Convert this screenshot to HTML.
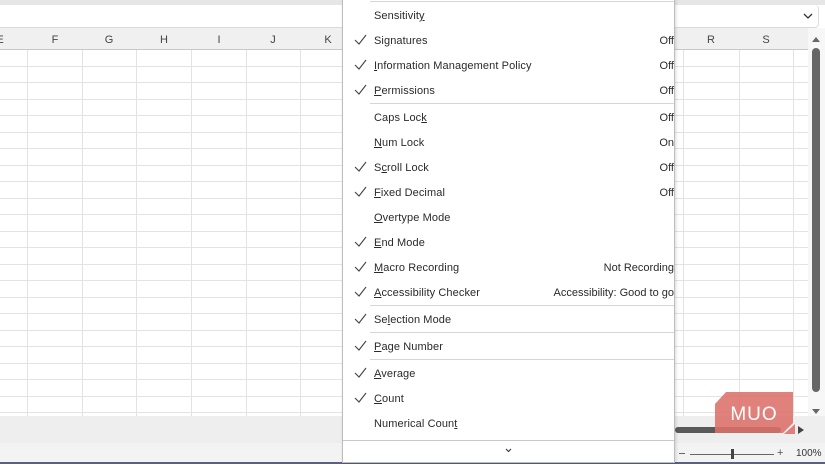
<!DOCTYPE html>
<html><head><style>
body{margin:0;width:825px;height:464px;overflow:hidden;position:relative;background:#fff;font-family:"Liberation Sans",sans-serif;}
.a{position:absolute;}
.col{position:absolute;top:28px;height:22px;line-height:24px;font-size:11px;color:#444;text-align:center;width:54px;}
.vl{position:absolute;top:50px;height:366px;width:1px;background:#e3e3e3;}
.hl{position:absolute;left:0;width:808px;height:1px;background:#e3e3e3;}
.it{position:absolute;left:374px;font-size:11px;color:#2a2a2a;margin-top:1px;letter-spacing:0.1px;}
.rv{position:absolute;right:151px;font-size:11px;color:#2a2a2a;text-align:right;margin-top:1px;}
.sep{position:absolute;left:370px;width:304px;height:1px;background:#d6d6d6;}
u{text-decoration:underline;text-underline-offset:1px;}
</style></head><body>
<div class="a" style="left:0;top:0;width:825px;height:5px;background:#e6e6e6"></div>
<div class="a" style="left:0;top:5px;width:818px;height:22px;background:#fff;border-bottom:1px solid #d9d9d9;border-right:1px solid #ddd;border-radius:0 4px 4px 0"></div>
<svg class="a" style="left:803px;top:13px" width="10" height="7"><path d="M1 1 L5 5 L9 1" fill="none" stroke="#333" stroke-width="1.3"/></svg>
<div class="a" style="left:0;top:28px;width:808px;height:21px;background:#f0f0f0;border-bottom:1px solid #c8c8c8"></div>
<div class="col" style="left:-27px">E</div>
<div class="col" style="left:28px">F</div>
<div class="col" style="left:82px">G</div>
<div class="col" style="left:137px">H</div>
<div class="col" style="left:192px">I</div>
<div class="col" style="left:246px">J</div>
<div class="col" style="left:301px">K</div>
<div class="col" style="left:684px">R</div>
<div class="col" style="left:739px">S</div>
<div class="vl" style="left:27px"></div><div class="vl" style="left:82px"></div><div class="vl" style="left:136px"></div><div class="vl" style="left:191px"></div><div class="vl" style="left:246px"></div><div class="vl" style="left:300px"></div><div class="vl" style="left:683px"></div><div class="vl" style="left:739px"></div><div class="vl" style="left:793px"></div>
<div class="hl" style="top:66px"></div><div class="hl" style="top:82px"></div><div class="hl" style="top:99px"></div><div class="hl" style="top:115px"></div><div class="hl" style="top:132px"></div><div class="hl" style="top:148px"></div><div class="hl" style="top:165px"></div><div class="hl" style="top:181px"></div><div class="hl" style="top:198px"></div><div class="hl" style="top:214px"></div><div class="hl" style="top:231px"></div><div class="hl" style="top:247px"></div><div class="hl" style="top:264px"></div><div class="hl" style="top:280px"></div><div class="hl" style="top:297px"></div><div class="hl" style="top:313px"></div><div class="hl" style="top:330px"></div><div class="hl" style="top:346px"></div><div class="hl" style="top:363px"></div><div class="hl" style="top:379px"></div><div class="hl" style="top:396px"></div><div class="hl" style="top:412px"></div>
<div class="a" style="left:808px;top:28px;width:17px;height:388px;background:#f7f7f7"></div>
<div class="a" style="left:812px;top:37px;width:0;height:0;border-left:4px solid transparent;border-right:4px solid transparent;border-bottom:5px solid #666"></div>
<div class="a" style="left:812px;top:48px;width:8px;height:344px;background:#666;border-radius:4px"></div>
<div class="a" style="left:812px;top:409px;width:0;height:0;border-left:4px solid transparent;border-right:4px solid transparent;border-top:5px solid #666"></div>
<div class="a" style="left:0;top:416px;width:825px;height:27px;background:#eeeeee"></div>
<div class="a" style="left:675px;top:427px;width:106px;height:6px;background:#5a5a5a;border-radius:3px"></div>
<div class="a" style="left:798px;top:426px;width:0;height:0;border-top:4px solid transparent;border-bottom:4px solid transparent;border-left:6px solid #444"></div>
<div class="a" style="left:0;top:443px;width:825px;height:19px;background:#f3f3f3"></div>
<div class="a" style="left:0;top:462px;width:825px;height:2px;background:#5c6080"></div>
<div class="a" style="left:679px;top:453px;width:6px;height:1px;background:#666"></div>
<div class="a" style="left:690px;top:454px;width:84px;height:1px;background:#666"></div>
<div class="a" style="left:731px;top:449px;width:3px;height:10px;background:#444"></div>
<div class="a" style="left:777px;top:447px;font-size:11px;color:#555">+</div>
<div class="a" style="left:796px;top:448px;font-size:10px;color:#333">100%</div>
<svg class="a" style="left:712px;top:390px" width="85" height="45" viewBox="0 0 85 45">
<path d="M14 2 H81 V33 L71 43 H3 V14 Z" fill="#dd6f6a" opacity="0.88"/>
<path d="M83 34 V44 H72 Z" fill="#dd6f6a" opacity="0.88"/>
<text x="42" y="30" font-family="Liberation Sans" font-size="19" fill="#fff" text-anchor="middle" letter-spacing="1">MUO</text>
</svg>
<div class="a" style="left:342px;top:-1px;width:331px;height:462px;background:#fff;border:1px solid #bdbdbd;box-shadow:1px 1px 3px rgba(0,0,0,.15)"></div>
<div class="sep" style="top:1px"></div>
<div class="it" style="top:9px">Sensitivit<u>y</u></div>
<div class="it" style="top:34px">Si<u>g</u>natures</div><div class="rv" style="top:34px">Off</div>
<div class="it" style="top:59px"><u>I</u>nformation Management Policy</div><div class="rv" style="top:59px">Off</div>
<div class="it" style="top:84px"><u>P</u>ermissions</div><div class="rv" style="top:84px">Off</div>
<div class="sep" style="top:103px"></div>
<div class="it" style="top:111px">Caps Loc<u>k</u></div><div class="rv" style="top:111px">Off</div>
<div class="it" style="top:136px"><u>N</u>um Lock</div><div class="rv" style="top:136px">On</div>
<div class="it" style="top:161px">S<u>c</u>roll Lock</div><div class="rv" style="top:161px">Off</div>
<div class="it" style="top:186px"><u>F</u>ixed Decimal</div><div class="rv" style="top:186px">Off</div>
<div class="it" style="top:211px"><u>O</u>vertype Mode</div>
<div class="it" style="top:236px"><u>E</u>nd Mode</div>
<div class="it" style="top:261px"><u>M</u>acro Recording</div><div class="rv" style="top:261px">Not Recording</div>
<div class="it" style="top:286px"><u>A</u>ccessibility Checker</div><div class="rv" style="top:286px">Accessibility: Good to go</div>
<div class="sep" style="top:305px"></div>
<div class="it" style="top:313px">Se<u>l</u>ection Mode</div>
<div class="sep" style="top:332px"></div>
<div class="it" style="top:340px"><u>P</u>age Number</div>
<div class="sep" style="top:359px"></div>
<div class="it" style="top:367px"><u>A</u>verage</div>
<div class="it" style="top:392px"><u>C</u>ount</div>
<div class="it" style="top:417px">Numerical Coun<u>t</u></div>
<div class="a" style="left:343px;top:440px;width:331px;height:1px;background:#c8c8c8"></div>
<svg class="a" style="left:505px;top:448px" width="7" height="5"><path d="M1 1 L3.5 3.5 L6 1" fill="none" stroke="#333" stroke-width="1.1"/></svg>
<svg class="a" style="left:0;top:0" width="825" height="464" pointer-events="none">
<g fill="none" stroke="#444" stroke-width="1.1">
<path d="M355 40 L359 44 L366 35"/><path d="M355 65 L359 69 L366 60"/><path d="M355 90 L359 94 L366 85"/>
<path d="M355 167 L359 171 L366 162"/><path d="M355 192 L359 196 L366 187"/>
<path d="M355 242 L359 246 L366 237"/><path d="M355 267 L359 271 L366 262"/><path d="M355 292 L359 296 L366 287"/>
<path d="M355 319 L359 323 L366 314"/><path d="M355 346 L359 350 L366 341"/>
<path d="M355 373 L359 377 L366 368"/><path d="M355 398 L359 402 L366 393"/>
</g></svg>
</body></html>
